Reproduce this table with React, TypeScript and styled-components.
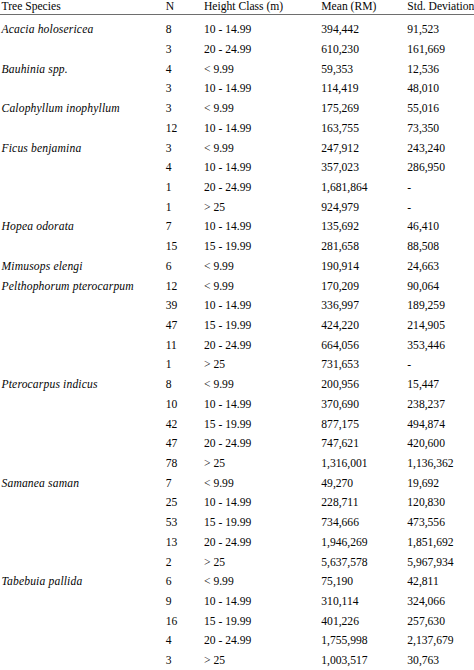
import * as React from 'react';
import styled, { createGlobalStyle } from 'styled-components';

const GlobalStyle = createGlobalStyle`
  html, body {
    margin: 0;
    padding: 0;
    background: #ffffff;
  }
  body {
    font-family: "Liberation Serif", "Times New Roman", serif;
    color: #050505;
  }
`;

interface Entry {
  species?: string;
  n: string;
  height: string;
  mean: string;
  std: string;
}

const rows: Entry[] = [
  { species: 'Acacia holosericea', n: '8', height: '10 - 14.99', mean: '394,442', std: '91,523' },
  { n: '3', height: '20 - 24.99', mean: '610,230', std: '161,669' },
  { species: 'Bauhinia spp.', n: '4', height: '< 9.99', mean: '59,353', std: '12,536' },
  { n: '3', height: '10 - 14.99', mean: '114,419', std: '48,010' },
  { species: 'Calophyllum inophyllum', n: '3', height: '< 9.99', mean: '175,269', std: '55,016' },
  { n: '12', height: '10 - 14.99', mean: '163,755', std: '73,350' },
  { species: 'Ficus benjamina', n: '3', height: '< 9.99', mean: '247,912', std: '243,240' },
  { n: '4', height: '10 - 14.99', mean: '357,023', std: '286,950' },
  { n: '1', height: '20 - 24.99', mean: '1,681,864', std: '-' },
  { n: '1', height: '> 25', mean: '924,979', std: '-' },
  { species: 'Hopea odorata', n: '7', height: '10 - 14.99', mean: '135,692', std: '46,410' },
  { n: '15', height: '15 - 19.99', mean: '281,658', std: '88,508' },
  { species: 'Mimusops elengi', n: '6', height: '< 9.99', mean: '190,914', std: '24,663' },
  { species: 'Pelthophorum pterocarpum', n: '12', height: '< 9.99', mean: '170,209', std: '90,064' },
  { n: '39', height: '10 - 14.99', mean: '336,997', std: '189,259' },
  { n: '47', height: '15 - 19.99', mean: '424,220', std: '214,905' },
  { n: '11', height: '20 - 24.99', mean: '664,056', std: '353,446' },
  { n: '1', height: '> 25', mean: '731,653', std: '-' },
  { species: 'Pterocarpus indicus', n: '8', height: '< 9.99', mean: '200,956', std: '15,447' },
  { n: '10', height: '10 - 14.99', mean: '370,690', std: '238,237' },
  { n: '42', height: '15 - 19.99', mean: '877,175', std: '494,874' },
  { n: '47', height: '20 - 24.99', mean: '747,621', std: '420,600' },
  { n: '78', height: '> 25', mean: '1,316,001', std: '1,136,362' },
  { species: 'Samanea saman', n: '7', height: '< 9.99', mean: '49,270', std: '19,692' },
  { n: '25', height: '10 - 14.99', mean: '228,711', std: '120,830' },
  { n: '53', height: '15 - 19.99', mean: '734,666', std: '473,556' },
  { n: '13', height: '20 - 24.99', mean: '1,946,269', std: '1,851,692' },
  { n: '2', height: '> 25', mean: '5,637,578', std: '5,967,934' },
  { species: 'Tabebuia pallida', n: '6', height: '< 9.99', mean: '75,190', std: '42,811' },
  { n: '9', height: '10 - 14.99', mean: '310,114', std: '324,066' },
  { n: '16', height: '15 - 19.99', mean: '401,226', std: '257,630' },
  { n: '4', height: '20 - 24.99', mean: '1,755,998', std: '2,137,679' },
  { n: '3', height: '> 25', mean: '1,003,517', std: '30,763' },
];

// column starts: 0, 164.2, 202.5, 319.8, 405.8
const columns = '164.2px 38.3px 117.3px 86px 1fr';

const Table = styled.div`
  width: 474px;
  overflow: hidden;
  font-size: 11.6px;
`;

const HeaderRow = styled.div`
  display: grid;
  grid-template-columns: ${columns};
  height: 13.5px;
  line-height: 13.5px;
  border-bottom: 1.3px solid #6e6e6e;
`;

const Body = styled.div`
  padding-top: 5.7px;
`;

const Row = styled.div`
  display: grid;
  grid-template-columns: ${columns};
  height: 19.72px;
  line-height: 19.72px;
`;

const Cell = styled.div<{ $italic?: boolean }>`
  padding-left: 1.5px;
  white-space: nowrap;
  font-style: ${(p) => (p.$italic ? 'italic' : 'normal')};
  letter-spacing: ${(p) => (p.$italic ? '0.15px' : '0')};
`;

export default function App() {
  return (
    <>
      <GlobalStyle />
      <Table>
        <HeaderRow>
          <Cell>Tree Species</Cell>
          <Cell>N</Cell>
          <Cell>Height Class (m)</Cell>
          <Cell>Mean (RM)</Cell>
          <Cell>Std. Deviation</Cell>
        </HeaderRow>
        <Body>
          {rows.map((r, i) => (
            <Row key={i}>
              <Cell $italic>{r.species ?? ''}</Cell>
              <Cell>{r.n}</Cell>
              <Cell>{r.height}</Cell>
              <Cell>{r.mean}</Cell>
              <Cell>{r.std}</Cell>
            </Row>
          ))}
        </Body>
      </Table>
    </>
  );
}
